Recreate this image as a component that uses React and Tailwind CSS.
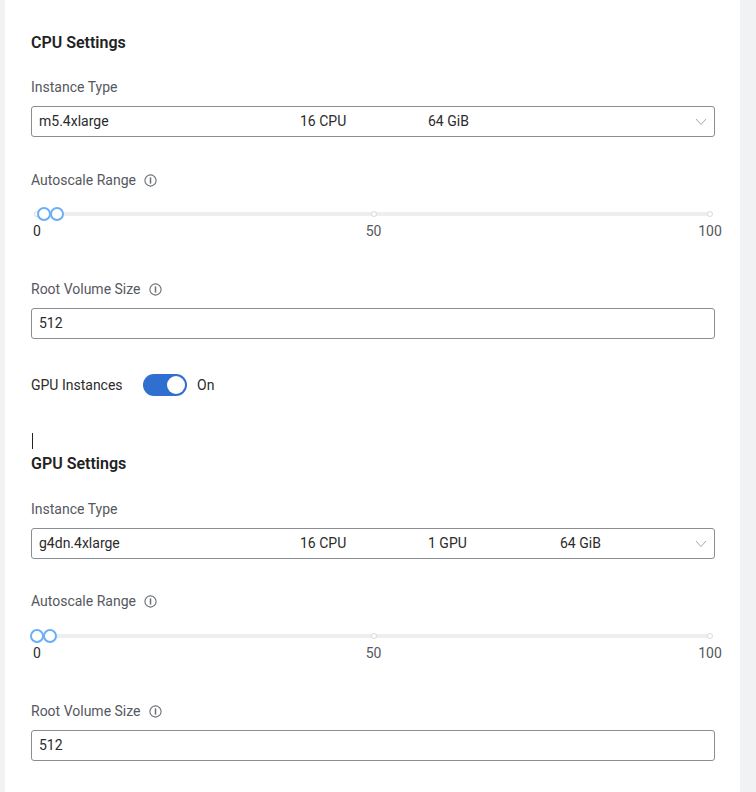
import React from "react";

const font = { fontFamily: "Roboto, 'Liberation Sans', sans-serif" };

function Info() {
  return (
    <svg width="13" height="13" viewBox="0 0 13 13" className="ml-[8px]">
      <circle cx="6.5" cy="6.5" r="5.6" fill="none" stroke="#6b6f76" strokeWidth="1.1" />
      <line x1="6.5" y1="3.4" x2="6.5" y2="9.6" stroke="#6b6f76" strokeWidth="1.5" />
    </svg>
  );
}

function Chevron() {
  return (
    <svg width="12" height="8" viewBox="0 0 12 8" className="ml-auto mr-[7px]">
      <polyline points="1,1 6,6.5 11,1" fill="none" stroke="#a3a6ab" strokeWidth="1" />
    </svg>
  );
}

function Label({ children }) {
  return (
    <div className="flex items-center text-[14px] leading-[16px] text-[#55585e]">{children}</div>
  );
}

function Select({ cols }) {
  return (
    <div className="h-[31px] border border-[#8a8d93] rounded-[3px] flex items-center pl-[7px] text-[14px] text-[#2b2b2b]">
      <span className="w-[261px]">{cols[0]}</span>
      {cols.slice(1).map((c, i) => (
        <span key={i} className={i === 0 ? "w-[128px]" : "w-[132px]"}>{c}</span>
      ))}
      <Chevron />
    </div>
  );
}

function Slider({ thumbs }) {
  return (
    <div className="flex flex-col gap-[3px]">
      <div className="relative h-[12px]">
        <div className="absolute left-[6px] right-[5px] top-[4px] h-[4px] rounded-full bg-[#eceef0]" />
        {[6, 342.5, 679].map((x, i) => (
          <div
            key={i}
            className="absolute top-[3px] w-[6px] h-[6px] rounded-full bg-white border border-[#d8dadd] -translate-x-1/2"
            style={{ left: x }}
          />
        ))}
        {thumbs.map((x, i) => (
          <div
            key={"t" + i}
            className="absolute -top-[1px] w-[14px] h-[14px] rounded-full bg-white border-2 border-[#6aaef5] -translate-x-1/2"
            style={{ left: x }}
          />
        ))}
      </div>
      <div className="relative h-[16px] text-[14px] leading-[16px]">
        <span className="absolute left-[6px] -translate-x-1/2 text-[#2b2b2b]">0</span>
        <span className="absolute left-[342.5px] -translate-x-1/2 text-[#55585e]">50</span>
        <span className="absolute left-[679px] -translate-x-1/2 text-[#55585e]">100</span>
      </div>
    </div>
  );
}

function Input() {
  return (
    <div className="h-[31px] border border-[#8a8d93] rounded-[3px] flex items-center pl-[7px] text-[14px] text-[#2b2b2b]">
      512
    </div>
  );
}

function Settings({ title, cols, thumbs, gaps }) {
  return (
    <div className="flex flex-col">
      <div className="text-[16px] leading-[20px] font-semibold text-[#222]">{title}</div>
      <div className={"flex flex-col gap-[11px] " + gaps[0]}>
        <Label>Instance Type</Label>
        <Select cols={cols} />
      </div>
      <div className={"flex flex-col " + gaps[1]}>
        <Label>Autoscale Range<Info /></Label>
        <Slider thumbs={thumbs} />
      </div>
      <div className="flex flex-col gap-[11px] mt-[42px]">
        <Label>Root Volume Size<Info /></Label>
        <Input />
      </div>
    </div>
  );
}

export default function App() {
  return (
    <div className="bg-[#f1f2f4] min-h-[792px] w-[756px] overflow-hidden" style={font}>
      <div className="ml-[5px] w-[735px] bg-white min-h-[792px] pl-[26px] pt-[33px]">
        <div className="w-[684px] flex flex-col">
          <Settings
            title="CPU Settings"
            cols={["m5.4xlarge", "16 CPU", "64 GiB"]}
            thumbs={[13, 26]}
            gaps={["mt-[26px]", "mt-[35px] gap-[20px]"]}
          />
          <div className="mt-[35px] h-[22px] flex items-center text-[14px] text-[#2b2b2b]">
            <span className="w-[112px]">GPU Instances</span>
            <div className="w-[44px] h-[22px] rounded-full bg-[#2f6fd0] flex items-center justify-end pr-[2px]">
              <div className="w-[18px] h-[18px] rounded-full bg-white" />
            </div>
            <span className="ml-[10px]">On</span>
          </div>
          <div className="mt-[37px] ml-[1px] w-[1px] h-[16px] bg-[#222]" />
          <div className="mt-[5px]">
            <Settings
              title="GPU Settings"
              cols={["g4dn.4xlarge", "16 CPU", "1 GPU", "64 GiB"]}
              thumbs={[6, 19]}
              gaps={["mt-[27px]", "mt-[34px] gap-[21px]"]}
            />
          </div>
        </div>
      </div>
    </div>
  );
}
